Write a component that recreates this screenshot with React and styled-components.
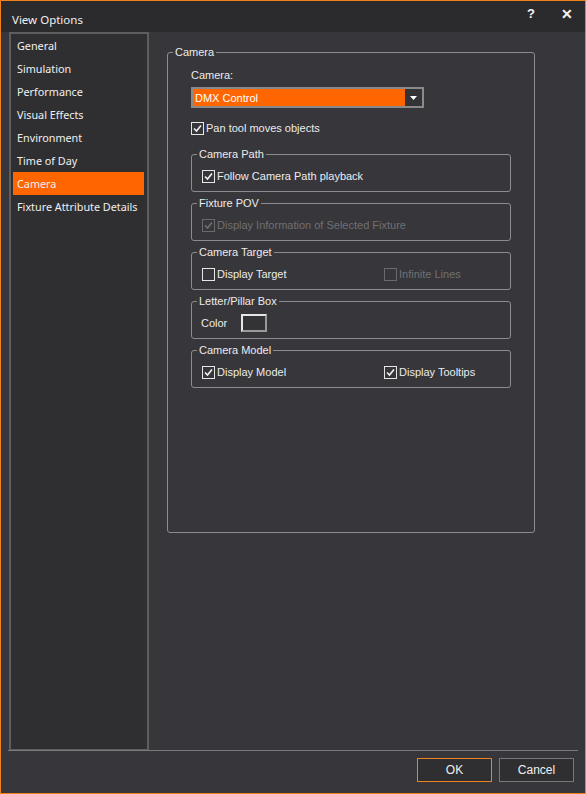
import React from "react";
import styled, { createGlobalStyle } from "styled-components";

const Global = createGlobalStyle`
  html, body { margin: 0; padding: 0; background: #37363b; }
  body { font-family: "Liberation Sans", Arial, sans-serif; font-size: 11px; color: #e8e8e8; }
  * { box-sizing: border-box; }
`;

const Window = styled.div`
  width: 586px;
  height: 794px;
  border: 1px solid #f0821e;
  background: #37363b;
  display: flex;
  flex-direction: column;
`;

const TitleBar = styled.div`
  height: 31px;
  background: #2b2b2e;
  display: flex;
  align-items: center;
  padding: 0 0 0 11px;
  flex-shrink: 0;
`;

const Title = styled.div`
  flex: 1;
  font-family: "Noto Sans", sans-serif;
  font-size: 11.5px;
  color: #f0f0f0;
  padding-top: 5px;
`;

const TitleBtn = styled.div`
  width: 36px;
  height: 24px;
  display: flex;
  align-items: center;
  justify-content: center;
  color: #f4f4f4;
  font-weight: bold;
  font-size: ${(p) => p.$size || 13}px;
  margin-top: -6px;
`;

const Body = styled.div`
  flex: 1;
  display: flex;
  padding: 0 0 0 8px;
  min-height: 0;
`;

const NavList = styled.div`
  width: 140px;
  height: 719px;
  border: 2px solid #5e5e60;
  background: #2f2f31;
  padding: 0 2px;
  display: flex;
  flex-direction: column;
`;

const NavItem = styled.div`
  height: 23px;
  display: flex;
  align-items: center;
  padding-left: 4px;
  font-family: "Noto Sans", sans-serif;
  font-size: 10.8px;
  white-space: nowrap;
  color: #f0f0f0;
  background: ${(p) => (p.$active ? "#ff6600" : "transparent")};
  margin-right: 1px;
`;

const Content = styled.div`
  flex: 1;
  padding: 13px 0 0 18px;
`;

const Group = styled.fieldset`
  margin: 0;
  border: 1px solid #8c8c8e;
  border-radius: 3px;
  padding: 0;
  width: ${(p) => p.$w}px;
  height: ${(p) => p.$h}px;
  min-width: 0;
`;

const Legend = styled.legend`
  padding: 0 2px;
  margin-left: 5px;
  font-size: 11px;
  color: #ececec;
  line-height: 14px;
`;

const Inner = styled.div`
  padding: ${(p) => p.$pad || "0"};
`;

const Stack = styled.div`
  display: flex;
  flex-direction: column;
  gap: ${(p) => p.$gap || 0}px;
`;

const Label = styled.div`
  font-size: 11px;
  color: #ececec;
  height: 14px;
  line-height: 14px;
`;

const Combo = styled.div`
  margin-top: 5px;
  width: 233px;
  height: 21px;
  border: 2px solid #8a8a8a;
  background: #ff6600;
  display: flex;
  align-items: stretch;
`;

const ComboText = styled.div`
  flex: 1;
  padding-left: 2px;
  display: flex;
  align-items: center;
  font-size: 11px;
  color: #fff;
`;

const ComboArrow = styled.div`
  width: 17px;
  background: #333336;
  display: flex;
  align-items: center;
  justify-content: center;
`;

const CheckRow = styled.label`
  display: flex;
  align-items: center;
  gap: 2px;
  font-size: 11px;
  height: 16px;
  color: ${(p) => (p.$disabled ? "#707072" : "#ececec")};
`;

const Box = styled.span`
  width: 13px;
  height: 13px;
  border: 1px solid ${(p) => (p.$disabled ? "#6a6a6c" : "#e6e6e6")};
  display: inline-flex;
  align-items: center;
  justify-content: center;
  flex-shrink: 0;
`;

const Row = styled.div`
  display: flex;
  align-items: center;
`;

const Col = styled.div`
  width: ${(p) => p.$w}px;
`;

const Spacer = styled.div`
  height: ${(p) => p.$h}px;
`;

const Swatch = styled.div`
  width: 26px;
  height: 18px;
  border: 2px solid #e6e6e6;
  border-right-color: #9a9a9a;
  border-bottom-color: #9a9a9a;
  background: #333335;
  margin-left: 14px;
`;

const Footer = styled.div`
  height: 43px;
  border-top: 1px solid #7a7a7c;
  margin: 0 7px 0 7px;
  display: flex;
  justify-content: flex-end;
  align-items: flex-start;
  padding-top: 7px;
  gap: 7px;
  flex-shrink: 0;
`;

const Button = styled.div`
  width: 75px;
  height: 24px;
  border: 1px solid ${(p) => (p.$primary ? "#f0821e" : "#78787a")};
  background: #2f2f31;
  display: flex;
  align-items: center;
  justify-content: center;
  font-size: 12px;
  color: #f0f0f0;
  margin-right: ${(p) => p.$mr || 0}px;
`;

const Check = ({ checked, disabled, children }) => (
  <CheckRow $disabled={disabled}>
    <Box $disabled={disabled}>
      {checked && (
        <svg width="9" height="9" viewBox="0 0 9 9">
          <path
            d="M1 4.5 L3.5 7 L8 1.5"
            fill="none"
            stroke={disabled ? "#707072" : "#f2f2f2"}
            strokeWidth="1.6"
          />
        </svg>
      )}
    </Box>
    {children}
  </CheckRow>
);

const navItems = [
  "General",
  "Simulation",
  "Performance",
  "Visual Effects",
  "Environment",
  "Time of Day",
  "Camera",
  "Fixture Attribute Details",
];

export default function App() {
  return (
    <>
      <Global />
      <Window>
        <TitleBar>
          <Title>View Options</Title>
          <TitleBtn $size={13}>?</TitleBtn>
          <TitleBtn $size={14}>✕</TitleBtn>
        </TitleBar>
        <Body>
          <NavList>
            {navItems.map((n) => (
              <NavItem key={n} $active={n === "Camera"}>
                {n}
              </NavItem>
            ))}
          </NavList>
          <Content>
            <Group $w={368} $h={488}>
              <Legend>Camera</Legend>
              <Inner $pad="9px 0 0 23px">
                <Stack>
                  <Label>Camera:</Label>
                  <Combo>
                    <ComboText>DMX Control</ComboText>
                    <ComboArrow>
                      <svg width="7" height="4" viewBox="0 0 7 4">
                        <path d="M0 0 L7 0 L3.5 4 Z" fill="#fff" />
                      </svg>
                    </ComboArrow>
                  </Combo>
                  <Spacer $h={12} />
                  <Check checked>Pan tool moves objects</Check>
                  <Spacer $h={11} />
                  <Stack $gap={4}>
                    <Group $w={320} $h={45}>
                      <Legend>Camera Path</Legend>
                      <Inner $pad="7px 0 0 10px">
                        <Check checked>Follow Camera Path playback</Check>
                      </Inner>
                    </Group>
                    <Group $w={320} $h={45}>
                      <Legend>Fixture POV</Legend>
                      <Inner $pad="7px 0 0 10px">
                        <Check checked disabled>
                          Display Information of Selected Fixture
                        </Check>
                      </Inner>
                    </Group>
                    <Group $w={320} $h={45}>
                      <Legend>Camera Target</Legend>
                      <Inner $pad="7px 0 0 10px">
                        <Row>
                          <Col $w={182}>
                            <Check>Display Target</Check>
                          </Col>
                          <Check disabled>Infinite Lines</Check>
                        </Row>
                      </Inner>
                    </Group>
                    <Group $w={320} $h={45}>
                      <Legend>Letter/Pillar Box</Legend>
                      <Inner $pad="6px 0 0 9px">
                        <Row>
                          <Label>Color</Label>
                          <Swatch />
                        </Row>
                      </Inner>
                    </Group>
                    <Group $w={320} $h={45}>
                      <Legend>Camera Model</Legend>
                      <Inner $pad="7px 0 0 10px">
                        <Row>
                          <Col $w={182}>
                            <Check checked>Display Model</Check>
                          </Col>
                          <Check checked>Display Tooltips</Check>
                        </Row>
                      </Inner>
                    </Group>
                  </Stack>
                </Stack>
              </Inner>
            </Group>
          </Content>
        </Body>
        <Footer>
          <Button $primary>OK</Button>
          <Button $mr={4}>Cancel</Button>
        </Footer>
      </Window>
    </>
  );
}
